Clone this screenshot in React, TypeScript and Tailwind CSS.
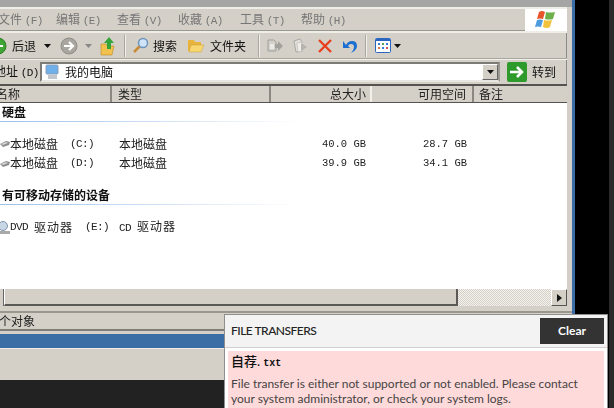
const cjk = "font-['SimSun','Noto_Sans_CJK_SC','Liberation_Sans',sans-serif]";

function M({ children }: { children: string }) {
  return <span className="font-['Liberation_Mono',monospace] text-[11px] tracking-[-0.6px] whitespace-pre">{children}</span>;
}

function Back({ off }: { off?: boolean }) {
  return (
    <svg width="18" height="18" viewBox="0 0 18 18" className="shrink-0">
      <circle cx="9" cy="9" r="8" fill={off ? "#a9a69f" : "#3fa535"} stroke={off ? "#8f8d87" : "#2b7d27"} />
      <path d={off ? "M4 9h8M9 5l4 4-4 4" : "M14 9H6M9 5L5 9l4 4"} fill="none" stroke="#fff" strokeWidth="2.2" />
    </svg>
  );
}

function Caret({ color = "#111" }: { color?: string }) {
  return (
    <svg width="7" height="4" viewBox="0 0 7 4" className="shrink-0">
      <path d="M0 0h7L3.500 4z" fill={color} />
    </svg>
  );
}

function Sep() {
  return <div className="w-[2px] h-[22px] bg-[#aaa79f] border-r border-[#f2f0ea] shrink-0" />;
}

function Drive() {
  return (
    <svg width="10" height="9" viewBox="0 0 10 9" className="shrink-0">
      <path d="M0 5l6-3 4 1-1 3-6 2z" fill="#8d8d8d" />
      <path d="M1 5l5-2 2 1-5 2z" fill="#d6d6d6" />
    </svg>
  );
}

function Row({ name, letter, type, total, free }: { name: string; letter: string; type: string; total: string; free: string }) {
  return (
    <div className="flex items-center h-[19.500px] text-[12px] leading-[16px] text-[#222]">
      <div className="w-[119px] flex items-center shrink-0 whitespace-pre">
        <Drive />
        <span>{name}</span>
        <M>{`  ${letter}`}</M>
      </div>
      <span className="w-[180px] shrink-0">{type}</span>
      <span className="w-[67px] text-right font-['Liberation_Mono',monospace] text-[10.500px] shrink-0">{total}</span>
      <span className="w-[101px] text-right font-['Liberation_Mono',monospace] text-[10.500px] shrink-0">{free}</span>
    </div>
  );
}

function Group({ title }: { title: string }) {
  return (
    <div className="h-[19px] pl-[2px]">
      <div className="text-[12px] font-bold leading-[16px] h-[17px] text-[#111]">{title}</div>
      <div className="h-[1px] w-[300px] -ml-[2px] bg-gradient-to-r from-[#9cc0ea] to-white" />
    </div>
  );
}

export default function App() {
  return (
    <div className={`relative w-[614px] h-[408px] overflow-hidden bg-black flex ${cjk}`}>
      <div className="w-[572px] h-full flex flex-col shrink-0 bg-[#d4d0c8] blur-[0.3px]">
        <div className="h-[7px] bg-[#a5a5a5] shrink-0" />
        <div className="h-[299px] shrink-0 flex flex-col min-h-0 border-r-[5px] border-r-[#d4d0c8] shadow-[inset_-1px_0_0_#8a8a8a]">
          <div className="h-[26px] flex border-y-2 border-y-[#efede7] shrink-0 bg-[#d4d0c8]">
            <div className="flex-1 flex items-center text-[12px] text-[#767676] border-b border-[#9a978f]">
              <span className="w-[58px] -ml-[2px] shrink-0">文件 <M>(F)</M></span>
              <span className="w-[61px] shrink-0">编辑 <M>(E)</M></span>
              <span className="w-[61px] shrink-0">查看 <M>(V)</M></span>
              <span className="w-[62px] shrink-0">收藏 <M>(A)</M></span>
              <span className="w-[61px] shrink-0">工具 <M>(T)</M></span>
              <span>帮助 <M>(H)</M></span>
            </div>
            <div className="w-[42px] bg-white flex items-center justify-center shrink-0">
              <svg width="22" height="20" viewBox="0 0 22 20">
                <path d="M4 2q3-2 6 0l-2 7q-3-1-6 0z" fill="#e8552a" />
                <path d="M11 2q4 1 9 0l-2 7q-4 1-8 0z" fill="#6db04a" />
                <path d="M2 10q3-1 6 0l-2 7q-3-1-6 0z" fill="#4f9be0" />
                <path d="M9 10q4 1 8 0l-2 7q-3 2-7 0z" fill="#f2c23c" />
              </svg>
            </div>
          </div>
          <div className="h-[26px] flex items-center text-[12px] text-[#111] shrink-0 border-b border-[#a9a69e]">
            <div className="-ml-[11px]"><Back /></div>
            <span className="ml-[5px]">后退</span>
            <div className="ml-[8px]"><Caret /></div>
            <div className="ml-[9px]"><Back off /></div>
            <div className="ml-[7px]"><Caret color="#888" /></div>
            <svg width="16" height="20" viewBox="0 0 16 20" className="ml-[8px] shrink-0">
              <path d="M1 8h5l1 2h7l-2 9H1z" fill="#f3c14e" stroke="#b98a24" strokeWidth="0.600" />
              <path d="M9 1l5 6h-3v6H7V7H4z" fill="#35a43a" />
            </svg>
            <div className="ml-[8px]"><Sep /></div>
            <svg width="17" height="17" viewBox="0 0 17 17" className="ml-[6px] shrink-0">
              <circle cx="11" cy="6" r="4.500" fill="#cfe4f8" stroke="#6d93bd" strokeWidth="1.500" />
              <path d="M7.500 9.500L2 15" stroke="#c98b36" strokeWidth="2.500" />
            </svg>
            <span className="ml-[4px]">搜索</span>
            <svg width="17" height="15" viewBox="0 0 17 15" className="ml-[10px] shrink-0">
              <path d="M1 2h6l1 2h6v3H5l-2 7-2-1z" fill="#e9b43d" />
              <path d="M4 7h13l-3 7H2z" fill="#f8d771" stroke="#c49a35" strokeWidth="0.500" />
            </svg>
            <span className="ml-[6px]">文件夹</span>
            <div className="ml-[12px]"><Sep /></div>
            <svg width="18" height="16" viewBox="0 0 18 16" className="ml-[6px] shrink-0">
              <path d="M2 2h6l2 2v9H2z" fill="#d2d0ca" stroke="#a09e98" />
              <path d="M4 6h4v5H4z" fill="#eceae4" />
              <path d="M9 6h3V3l5 5-5 5v-3H9z" fill="#a3a19b" />
            </svg>
            <svg width="16" height="16" viewBox="0 0 16 16" className="ml-[8px] shrink-0">
              <path d="M2 3l6-2 2 3v9l-6 1z" fill="#e2e0da" stroke="#aaa8a2" />
              <path d="M5 5l5-1 1 2v7l-5 1z" fill="#efede7" stroke="#b4b2ac" strokeWidth="0.600" />
              <path d="M9 5l6 4-6 4z" fill="#b5b3ad" />
            </svg>
            <svg width="16" height="16" viewBox="0 0 16 16" className="ml-[9px] shrink-0">
              <path d="M2 2l12 12M14 2L2 14" stroke="#e8401f" strokeWidth="2.400" />
            </svg>
            <svg width="18" height="16" viewBox="0 0 18 16" className="ml-[8px] shrink-0">
              <path d="M5 7q2-4 6-4 5 0 5 5 0 4-6 7 3-3 3-6 0-3-3-3-2 0-3 2l2 2H2V3z" fill="#1b6fd0" />
            </svg>
            <div className="ml-[6px]"><Sep /></div>
            <svg width="16" height="15" viewBox="0 0 16 15" className="ml-[8px] shrink-0">
              <rect x="0.500" y="0.500" width="15" height="14" rx="1" fill="#fff" stroke="#2a66c0" />
              <rect x="1" y="1" width="14" height="2" fill="#2a66c0" />
              <path d="M3 5h2v2H3z" fill="#3a7bd5" />
              <path d="M7 5h2v2H7z" fill="#5aa654" />
              <path d="M11 5h2v2h-2z" fill="#3a7bd5" />
              <path d="M3 9h2v2H3z" fill="#e07a3a" />
              <path d="M7 9h2v2H7z" fill="#3a7bd5" />
              <path d="M11 9h2v2h-2z" fill="#d9534f" />
            </svg>
            <div className="ml-[3px]"><Caret /></div>
          </div>
          <div className="h-[25px] flex items-center text-[12px] text-[#111] shrink-0 border-t border-[#f2f0ea]">
            <span className="w-[40px] -ml-[6px] shrink-0 whitespace-nowrap">地址 <M>(D)</M></span>
            <div className="ml-[6px] w-[460px] h-[20px] bg-white border-2 border-[#7d7b76] border-b-[#e8e6e0] border-r-[#9a9892] flex items-center shrink-0">
              <svg width="14" height="16" viewBox="0 0 14 16" className="ml-[3px] shrink-0">
                <rect x="1" y="1" width="12" height="9" rx="1" fill="#6fb0ea" stroke="#8a9db3" />
                <rect x="3" y="11" width="9" height="4" fill="#c2c6cc" />
              </svg>
              <span className="ml-[6px] flex-1">我的电脑</span>
              <div className="w-[16px] h-[16px] bg-[#d4d0c8] border border-[#fff] border-r-[#666] border-b-[#666] flex items-center justify-center shrink-0"><Caret /></div>
            </div>
            <div className="ml-[7px] w-[20px] h-[20px] bg-[#2f9a2c] rounded-[2px] flex items-center justify-center shrink-0">
              <svg width="16" height="14" viewBox="0 0 16 14">
                <path d="M1 7h12M8 2l5 5-5 5" fill="none" stroke="#fff" strokeWidth="2.500" />
              </svg>
            </div>
            <span className="ml-[5px]">转到</span>
          </div>
          <div className="h-[19px] flex text-[12px] text-[#222] shrink-0 border-t-2 border-[#55534f] bg-[#d4d0c8] border-b border-[#9a978f]">
            <div className="w-[113px] border-r-2 border-r-[#8a8880] -ml-[1px] shrink-0 leading-[16px]"><span className="-ml-[3px] inline-block">名称</span></div>
            <div className="w-[159px] border-r-2 border-r-[#8a8880] pl-[6px] shrink-0 leading-[16px]">类型</div>
            <div className="w-[101px] border-r-2 border-r-[#f2f0ea] pr-[4px] text-right shrink-0 leading-[16px]">总大小</div>
            <div className="w-[102px] border-r-2 border-r-[#8a8880] pr-[6px] text-right shrink-0 leading-[16px]">可用空间</div>
            <div className="pl-[5px] leading-[16px]">备注</div>
          </div>
          <div className="flex-1 bg-white min-h-0 overflow-hidden pt-[1px]">
            <Group title="硬盘" />
            <div className="h-[11px]" />
            <Row name="本地磁盘" letter="(C:)" type="本地磁盘" total="40.0 GB" free="28.7 GB" />
            <Row name="本地磁盘" letter="(D:)" type="本地磁盘" total="39.9 GB" free="34.1 GB" />
            <div className="h-[14px]" />
            <Group title="有可移动存储的设备" />
            <div className="h-[11px]" />
            <div className="flex items-center h-[20px] text-[12px] leading-[16px] text-[#222]">
              <div className="w-[119px] flex items-center shrink-0 whitespace-pre">
                <svg width="10" height="13" viewBox="0 0 10 13" className="shrink-0">
                  <circle cx="3" cy="5" r="4.500" fill="#c9d6e6" stroke="#8294aa" />
                  <path d="M0 10h10v3H0z" fill="#a9a9a9" />
                </svg>
                <M>DVD </M><span className="tracking-[1px]">驱动器</span><M>  (E:)</M>
              </div>
              <span><M>CD </M><span className="tracking-[1px]">驱动器</span></span>
            </div>
          </div>
          <div className="h-[17px] flex bg-[repeating-conic-gradient(#d4d0c8_0_25%,#f4f3ef_0_50%)] bg-[length:2px_2px] shrink-0">
            <div className="w-[4px] bg-[#d4d0c8] border-r border-[#666] shrink-0" />
            <div className="w-[454px] bg-[#d4d0c8] border-l border-l-white border-b-2 border-b-[#5c5a56] border-r-2 border-r-[#5c5a56] shrink-0" />
            <div className="flex-1" />
            <div className="w-[16px] bg-[#d4d0c8] border border-white border-r-[#555] border-b-[#555] flex items-center justify-center shrink-0">
              <svg width="5" height="8" viewBox="0 0 5 8"><path d="M0 0l5 4-5 4z" fill="#111" /></svg>
            </div>
          </div>
        </div>
        <div className="h-[5px] shrink-0" />
        <div className="h-[20px] text-[12px] text-[#222] border-t-2 border-t-[#9a978f] border-b-2 border-b-[#807e78] leading-[16px] shrink-0">
          <span className="-ml-[1px] inline-block">个对象</span>
        </div>
        <div className="h-[3px] shrink-0 bg-[#d4d0c8]" />
        <div className="h-[14px] bg-[#3a6ea5] shrink-0" />
        <div className="h-[1px] bg-[#eeece6] shrink-0" />
        <div className="h-[31px] bg-[#d4d0c8] shrink-0" />
        <div className="flex-1 bg-[#222222]" />
      </div>
      <div className="w-[3px] h-[380px] bg-[#3a6ea5] shrink-0" />
      <div className="flex-1" />
      <div className="w-[5px] h-full bg-[#2b2b2b] shrink-0" />

      <div className="absolute left-[224px] top-[314px] w-[384px] h-[94px] bg-white border border-[#8f8f8f] border-b-0 font-['Lato','Noto_Sans_CJK_SC',sans-serif]">
        <div className="h-[33px] bg-[#f3f3f3] border-b border-[#d0d0d0] flex items-center justify-between pl-[6px] pr-[3px]">
          <span className="text-[12px] font-medium tracking-[-0.5px] text-[#222]">FILE TRANSFERS</span>
          <div className="w-[64px] h-[26px] bg-[#333333] text-white text-[12px] font-bold flex items-center justify-center">Clear</div>
        </div>
        <div className="mt-[3px] mx-[3px] h-[57px] bg-[#ffdada] px-[3px] text-[#333]">
          <div className="text-[13px] leading-[18px] pt-[1px] font-medium text-[#111]">自荐. <span className="font-['Liberation_Mono',monospace] text-[10px] font-bold">txt</span></div>
          <p className="text-[12px] leading-[15px] mt-[3px] whitespace-nowrap text-[#444]">File transfer is either not supported or not enabled. Please contact<br />your system administrator, or check your system logs.</p>
        </div>
      </div>
    </div>
  );
}
